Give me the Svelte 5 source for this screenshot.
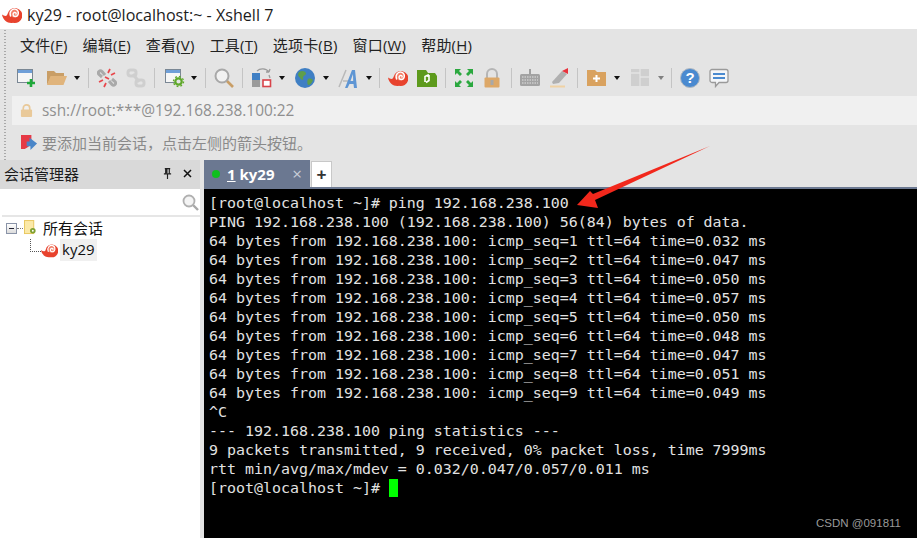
<script>
  const menus = [
    ["文件(", "F", ")"],
    ["编辑(", "E", ")"],
    ["查看(", "V", ")"],
    ["工具(", "T", ")"],
    ["选项卡(", "B", ")"],
    ["窗口(", "W", ")"],
    ["帮助(", "H", ")"]
  ];

  const times = ["0.032", "0.047", "0.050", "0.057", "0.050", "0.048", "0.047", "0.051", "0.049"];

  const term_lines = [
    "[root@localhost ~]# ping 192.168.238.100",
    "PING 192.168.238.100 (192.168.238.100) 56(84) bytes of data.",
    ...times.map((t, i) => `64 bytes from 192.168.238.100: icmp_seq=${i + 1} ttl=64 time=${t} ms`),
    "^C",
    "--- 192.168.238.100 ping statistics ---",
    "9 packets transmitted, 9 received, 0% packet loss, time 7999ms",
    "rtt min/avg/max/mdev = 0.032/0.047/0.057/0.011 ms"
  ];
</script>

{#snippet snail(cls)}
  <svg class={cls} viewBox="0 0 20 20">
    <path d="M0 9.500C2.500 11.500 5 11.500 5.500 9A7.500 7.500 0 1 1 11 17.800C6 18.800 1 15.500 0 9.500Z" fill="#e8432e"/>
    <circle cx="12.500" cy="8.500" r="4" fill="#f4806a"/>
    <path d="M8.500 11C6.800 6.500 10.500 3 14 4.300C17.500 5.800 17 11.500 13.200 11.500C10.800 11.500 10.300 8.300 12.300 7.500C13.500 7 14.500 8 14 9" fill="none" stroke="#fff" stroke-width="1.400" stroke-linecap="round"/>
  </svg>
{/snippet}

{#snippet drop(extra)}
  <span class="drop {extra}"></span>
{/snippet}

<div class="window">
  <div class="titlebar">
    {@render snail("logo")}
    <span class="title">ky29 - root@localhost:~ - Xshell 7</span>
  </div>

  <div class="chrome">
    <div class="grip"></div>

    <div class="menubar">
      {#each menus as m}
        <span class="menu">{m[0]}<u>{m[1]}</u>{m[2]}</span>
      {/each}
    </div>

    <div class="toolbar">
      <svg class="ic" viewBox="0 0 20 20">
        <rect x="0.500" y="1.500" width="15" height="13" fill="#f6f6f6" stroke="#7a8794"/>
        <rect x="1" y="2" width="14" height="3" fill="#6f9fd8"/>
        <path d="M14 11v8M10 15h8" stroke="#1fa83a" stroke-width="2.600"/>
      </svg>
      <svg class="ic p2" viewBox="0 0 20 20">
        <path d="M0 3h7l2 2h8v4H4L0 17Z" fill="#c99e66"/>
        <path d="M3.500 8H20L16.500 17H0Z" fill="#e0b47c"/>
      </svg>
      {@render drop("m1")}
      <span class="sep"></span>
      <svg class="ic" viewBox="0 0 20 20">
        <g fill="none" stroke="#a9a9a9" stroke-width="3">
          <path d="M8 7L5 3.500a2 2 0 0 0-3 3L5 9"/>
          <path d="M12 13l3 3.500a2 2 0 0 0 3-3L15 11"/>
        </g>
        <path d="M13 1l-2 4M18 5l-4 2M2 14l4-2M7 19l2-4M8 9l4 2" stroke="#e8474c" stroke-width="1.700"/>
      </svg>
      <svg class="ic p1" viewBox="0 0 20 20">
        <g fill="none" stroke="#cfcfcf" stroke-width="3">
          <rect x="2" y="2" width="8" height="6" rx="2.500"/>
          <rect x="10" y="12" width="8" height="6" rx="2.500"/>
          <path d="M7 6l6 8"/>
        </g>
      </svg>
      <span class="sep"></span>
      <svg class="ic p2" viewBox="0 0 20 20">
        <rect x="0.500" y="1.500" width="15" height="13" fill="#f6f6f6" stroke="#7a8794"/>
        <rect x="1" y="2" width="14" height="3" fill="#6f9fd8"/>
        <circle cx="13.500" cy="13.500" r="3.200" fill="#e4e4e4" stroke="#5fa82a" stroke-width="2.200"/>
        <circle cx="13.500" cy="13.500" r="5" fill="none" stroke="#5fa82a" stroke-width="1.400" stroke-dasharray="1.800 2.100"/>
      </svg>
      {@render drop("m2")}
      <span class="sep"></span>
      <svg class="ic" viewBox="0 0 20 20">
        <path d="M12.500 12.500L19 19" stroke="#c99e66" stroke-width="2.600"/>
        <circle cx="8" cy="8" r="6.500" fill="#f2f2f2" stroke="#a8a8a8" stroke-width="2"/>
      </svg>
      <span class="sep"></span>
      <svg class="ic p1" viewBox="0 0 20 20">
        <rect x="0" y="5" width="8" height="7" fill="#3f7fc4"/>
        <rect x="0" y="12" width="8" height="7" fill="#9b9b9b"/>
        <rect x="11" y="12" width="7.500" height="6.500" fill="#fff" stroke="#d8434a" stroke-width="1.600"/>
        <path d="M5 3C8 0 14 0 17 4M17 4l1-3M17 4l-3 0M18 10l-1-3" fill="none" stroke="#9b9b9b" stroke-width="1.300"/>
      </svg>
      {@render drop("m1")}
      <svg class="ic p2" viewBox="0 0 20 20">
        <circle cx="10" cy="10" r="10" fill="#3f7fc4"/>
        <path d="M4 4c3-2 6-1 7 1 0 3-3 2-3 5 1 3-2 2-3 0-1-2-3-2-1-6ZM13 11c2-1 4 0 5 1-1 3-3 5-5 5-1-2-1-4 0-6Z" fill="#5f9e4a"/>
      </svg>
      {@render drop("")}
      <svg class="ic p1" viewBox="0 0 20 20">
        <path d="M1 19L8 2M5 13h5" stroke="#b9b9b9" stroke-width="1.500" fill="none"/>
        <path d="M14 2h3l2 18h-3l-.500-4h-4l-2 4H7ZM15 6l-2.500 7H15.200Z" fill="#5f96d4" fill-rule="evenodd"/>
      </svg>
      {@render drop("")}
      <span class="sep m1"></span>
      {@render snail("ic")}
      <svg class="ic p1" viewBox="0 0 20 20">
        <path d="M0 2h9l2 3h7l2 3v11H0Z" fill="#5d9a1c"/>
        <path d="M8 14V8.500l3-1.500V9M12 7v5.500l-3 2" fill="none" stroke="#fff" stroke-width="1.600"/>
      </svg>
      <span class="sep"></span>
      <svg class="ic" viewBox="0 0 20 20">
        <g fill="#2ba83f">
          <path d="M1 1h6L5 3l3 3-2 2-3-3-2 2ZM19 1v6l-2-2-3 3-2-2 3-3-2-2ZM1 19v-6l2 2 3-3 2 2-3 3 2 2ZM19 19h-6l2-2-3-3 2-2 3 3 2-2Z"/>
        </g>
      </svg>
      <svg class="ic" viewBox="0 0 20 20">
        <path d="M5 10V6a5 5 0 0 1 10 0v4" fill="none" stroke="#b5b5b5" stroke-width="2"/>
        <rect x="2.500" y="9.500" width="15" height="10" rx="1" fill="#dda868"/>
        <rect x="8.500" y="12" width="3" height="5" fill="#a8a8a8"/>
      </svg>
      <span class="sep p1"></span>
      <svg class="ic" viewBox="0 0 20 20">
        <path d="M10 1v5" stroke="#8a8a8a" stroke-width="1.500"/>
        <rect x="0" y="6" width="20" height="12" rx="1.500" fill="#a3a3a3"/>
        <path d="M2 9h16M2 12h16M2 15h16" stroke="#e2e2e2" stroke-width="1" stroke-dasharray="1.500 1"/>
      </svg>
      <svg class="ic p1" viewBox="0 0 20 20">
        <path d="M3 14L13 3l5 3-8 9-6 1Z" fill="#b0b0b0"/>
        <path d="M13 3l6-3v6Z" fill="#e8323c"/>
        <path d="M1 18.500h15" stroke="#f0d2a4" stroke-width="2"/>
      </svg>
      <span class="sep"></span>
      <svg class="ic p1" viewBox="0 0 20 20">
        <path d="M0 2h8l2 2h9v14H0Z" fill="#d9a25f"/>
        <path d="M9.500 7v7M6 10.500h7" stroke="#fff" stroke-width="2"/>
      </svg>
      {@render drop("m1")}
      <svg class="ic p2" viewBox="0 0 20 20">
        <rect x="1" y="1" width="18" height="17" fill="#cfcfcf"/>
        <path d="M10 1v17M10 9h9M1 5h9" stroke="#e4e4e4" stroke-width="1.300"/>
      </svg>
      {@render drop("off")}
      <span class="sep m1"></span>
      <svg class="ic" viewBox="0 0 20 20">
        <circle cx="10" cy="10" r="9.500" fill="#4a8ad0" stroke="#b0b8c0" stroke-width="1"/>
        <text x="10" y="15" text-anchor="middle" class="help">?</text>
      </svg>
      <svg class="ic p1" viewBox="0 0 20 20">
        <path d="M3 1.500h14a2 2 0 0 1 2 2v9a2 2 0 0 1-2 2H10l-3.500 4v-4H3a2 2 0 0 1-2-2v-9a2 2 0 0 1 2-2Z" fill="#f4f6f8" stroke="#9a9a9a" stroke-width="1.300"/>
        <path d="M4 6h12M4 10h12" stroke="#4a8ad0" stroke-width="2"/>
      </svg>
    </div>

    <div class="addressbar">
      <svg class="addr-lock" viewBox="0 0 14 14">
        <path d="M3.500 7V4.500a3.500 3.500 0 0 1 7 0V7" fill="none" stroke="#e9c999" stroke-width="1.800"/>
        <rect x="1" y="6" width="12" height="8" rx="1" fill="#e9c999"/>
      </svg>
      <span>ssh://root:***@192.168.238.100:22</span>
    </div>

    <div class="hintbar">
      <svg class="hint-ic" viewBox="0 0 18 18">
        <path d="M0 1h11v10l-4 3-3 2H0Z" fill="#e63a46"/>
        <path d="M9 4l8 6-7 7V13H6V8h3Z" fill="#4a86c8"/>
      </svg>
      <span>要添加当前会话，点击左侧的箭头按钮。</span>
    </div>
  </div>

  <div class="main">
    <div class="sidebar">
      <div class="side-head">
        <span>会话管理器</span>
        <svg class="pin" viewBox="0 0 10 12">
          <path d="M2 0.500h6M3 1v5M7 1v5M1 6.500h8M5 7v5" stroke="#222" stroke-width="1.300" fill="none"/>
          <rect x="3" y="1" width="2" height="5" fill="#222"/>
        </svg>
        <svg class="close" viewBox="0 0 9 9">
          <path d="M1 1l7 7M8 1l-7 7" stroke="#111" stroke-width="1.500"/>
        </svg>
      </div>
      <div class="side-search">
        <svg viewBox="0 0 17 17">
          <path d="M11 11l5 5" stroke="#a8a8a8" stroke-width="2.400"/>
          <circle cx="7" cy="7" r="5.500" fill="#f4f4f4" stroke="#b0b0b0" stroke-width="1.800"/>
        </svg>
      </div>
      <div class="tree">
        <div class="tree-root">
          <span class="expander"></span>
          <span class="dots-h"></span>
          <svg class="tree-folder" viewBox="0 0 14 17">
            <rect x="0.500" y="0.500" width="10" height="14" fill="#fbe9a8" stroke="#e8c55a"/>
            <circle cx="9.500" cy="11.500" r="3" fill="#7fa030"/>
            <circle cx="9.500" cy="11.500" r="1" fill="#fff"/>
          </svg>
          <span class="tree-label">所有会话</span>
        </div>
        <div class="tree-child">
          <span class="dots-l"></span>
          {@render snail("tree-logo")}
          <span class="tree-sel">ky29</span>
        </div>
      </div>
    </div>

    <div class="content">
      <div class="tabs">
        <div class="tab">
          <span class="dot"></span>
          <span class="tab-name"><u>1</u> ky29</span>
          <span class="tab-x">×</span>
        </div>
        <div class="tab-add">+</div>
      </div>
      <div class="terminal">
        {#each term_lines as line}
          <div class="row">{line}</div>
        {/each}
        <div class="row">[root@localhost ~]# <span class="cursor"></span></div>
      </div>
    </div>
  </div>

  <svg class="arrow" viewBox="0 0 150 70">
    <path d="M136 1L19 49 16 46 3 60 24 63 21 55Z" fill="#f2281c"/>
  </svg>
  <span class="watermark">CSDN @091811</span>
</div>

<style>
  :global(body) {
    margin: 0;
    background: #fff;
  }

  .window {
    position: relative;
    width: 917px;
    height: 538px;
    overflow: hidden;
    display: flex;
    flex-direction: column;
    font-family: "Open Sans", "Noto Sans CJK SC", sans-serif;
    color: #222;
  }

  .titlebar {
    height: 29px;
    flex: none;
    display: flex;
    align-items: center;
    padding-left: 2px;
    background: #fff;
  }

  .logo {
    width: 20px;
    height: 20px;
    margin-right: 5px;
  }

  .title {
    font-size: 16.100px;
    color: #1c1c1c;
  }

  .chrome {
    position: relative;
    flex: none;
    height: 131px;
    background: #e4e4e4;
    display: flex;
    flex-direction: column;
  }

  .grip {
    position: absolute;
    left: 4px;
    top: 1px;
    bottom: 0;
    width: 2px;
    background: repeating-linear-gradient(#a9a9a9 0 1px, #e4e4e4 1px 3px);
  }

  .menubar {
    height: 31px;
    display: flex;
    align-items: center;
    gap: 15px;
    padding-left: 20px;
    font-size: 15px;
    letter-spacing: 0.2px;
    color: #222;
  }

  .menu u {
    text-underline-offset: 2px;
  }

  .toolbar {
    height: 36px;
    padding-bottom: 1px;
    box-sizing: border-box;
    display: flex;
    align-items: center;
    gap: 8px;
    padding-left: 17px;
  }

  .ic {
    width: 20px;
    height: 20px;
    flex: none;
  }

  .help {
    font-family: "Liberation Sans", sans-serif;
    font-size: 15px;
    font-weight: 700;
    fill: #fff;
  }

  .p1 { margin-left: 1px; }
  .p2 { margin-left: 2px; }
  .m1 { margin-left: -1px; }
  .m2 { margin-left: -2px; }

  .drop {
    flex: none;
    width: 0;
    height: 0;
    border-left: 3.500px solid transparent;
    border-right: 3.500px solid transparent;
    border-top: 4px solid #111;
  }

  .drop.off {
    border-top-color: #808080;
  }

  .sep {
    flex: none;
    width: 1px;
    height: 20px;
    background: #c4c4c4;
  }

  .addressbar {
    height: 29px;
    margin-left: 12px;
    display: flex;
    align-items: center;
    background: #f0f0f0;
    font-size: 15.400px;
    color: #8f8f8f;
    padding-left: 8px;
    gap: 9px;
  }

  .addr-lock {
    width: 13px;
    height: 13px;
  }

  .hintbar {
    flex: 1;
    display: flex;
    align-items: center;
    padding-left: 21px;
    gap: 4px;
    font-size: 15px;
    color: #8a8a8a;
  }

  .hint-ic {
    width: 17px;
    height: 17px;
  }

  .main {
    flex: 1;
    display: flex;
    min-height: 0;
    background: #e4e4e4;
  }

  .sidebar {
    width: 200px;
    flex: none;
    background: #fff;
    display: flex;
    flex-direction: column;
  }

  .side-head {
    height: 29px;
    padding: 0 8px 2px 4px;
    box-sizing: border-box;
    flex: none;
    display: flex;
    align-items: center;
    background: #d9d9d9;
    font-size: 15px;
    color: #1c1c1c;
  }

  .side-head span {
    flex: 1;
  }

  .pin {
    width: 9px;
    height: 11px;
    margin-right: 11px;
  }

  .close {
    width: 9px;
    height: 9px;
  }

  .side-search {
    height: 26px;
    flex: none;
    margin-left: 2px;
    display: flex;
    align-items: center;
    justify-content: flex-end;
    padding-right: 1px;
    border-bottom: 2px solid #e6e6e6;
    box-sizing: content-box;
  }

  .side-search svg {
    width: 17px;
    height: 17px;
  }

  .tree {
    flex: 1;
    padding-left: 6px;
    font-size: 15px;
    color: #111;
    background: #fff;
  }

  .tree-root {
    height: 22px;
    display: flex;
    align-items: center;
  }

  .tree-label {
    margin-top: -2px;
  }

  .expander {
    position: relative;
    width: 9px;
    height: 9px;
    border: 1px solid #8a94a8;
    background: linear-gradient(#fff, #dcdcdc);
    flex: none;
  }

  .expander::after {
    content: "";
    position: absolute;
    left: 2px;
    right: 2px;
    top: 4px;
    height: 1px;
    background: #223;
  }

  .dots-h {
    width: 6px;
    border-top: 1px dotted #777;
    flex: none;
  }

  .tree-folder {
    width: 13px;
    height: 16px;
    margin-left: 1px;
    margin-right: 6px;
    flex: none;
  }

  .tree-child {
    height: 22px;
    display: flex;
    align-items: center;
    padding-left: 24px;
  }

  .dots-l {
    width: 10px;
    height: 12px;
    margin-top: -10px;
    border-left: 1px dotted #555;
    border-bottom: 1px dotted #555;
    flex: none;
  }

  .tree-logo {
    width: 17px;
    height: 17px;
    margin-right: 2px;
    flex: none;
  }

  .tree-sel {
    height: 22px;
    line-height: 21px;
    padding: 0 2px;
    background: #f0f0f0;
  }

  .content {
    flex: 1;
    min-width: 0;
    margin-left: 4px;
    display: flex;
    flex-direction: column;
  }

  .tabs {
    height: 27px;
    flex: none;
    display: flex;
    gap: 1px;
  }

  .tab {
    width: 106px;
    height: 27px;
    background: #6b7891;
    display: flex;
    align-items: center;
    color: #fff;
    font-size: 15px;
    font-weight: 700;
    padding-left: 8px;
    box-sizing: border-box;
  }

  .dot {
    width: 8px;
    height: 8px;
    border-radius: 50%;
    background: #0fc01f;
    margin-right: 7px;
    flex: none;
  }

  .tab-name {
    flex: 1;
  }

  .tab-x {
    font-weight: 400;
    font-size: 17px;
    color: #c8ced8;
    margin-right: 8px;
  }

  .tab-add {
    width: 21px;
    height: 26px;
    margin-top: 1px;
    background: #fff;
    border: 1px solid #c8c8c8;
    border-bottom: none;
    text-align: center;
    font: 700 17px/25px "Liberation Sans", sans-serif;
    color: #333;
    box-sizing: border-box;
  }

  .terminal {
    flex: 1;
    min-height: 0;
    background: #000;
    border-top: 2px solid #6b7891;
    padding: 5px 0 0 5px;
    font: 14.950px/19px "DejaVu Sans Mono", monospace;
    color: #e2e2e2;
  }

  .row {
    height: 19px;
    white-space: pre;
  }

  .cursor {
    display: inline-block;
    width: 9px;
    height: 18px;
    background: #00ff00;
    vertical-align: -4px;
  }

  .arrow {
    position: absolute;
    left: 574px;
    top: 145px;
    width: 150px;
    height: 70px;
  }

  .watermark {
    position: absolute;
    right: 16px;
    bottom: 9px;
    font: 11.500px "Liberation Sans", sans-serif;
    color: #9a9a9a;
  }
</style>
